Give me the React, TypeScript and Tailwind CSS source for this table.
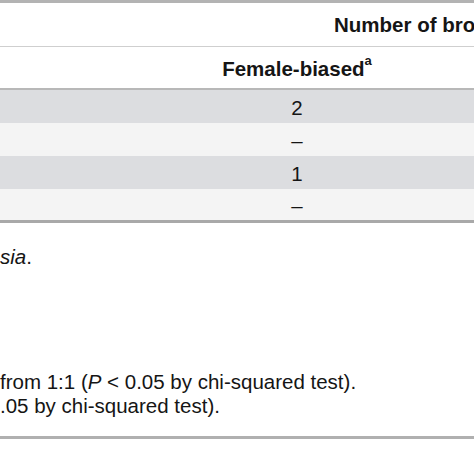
export default function App() {
  const rows = [
    { v: "2", bg: "bg-[#dcdde0]", h: "h-[33px]", lead: "leading-[30px]" },
    { v: "–", bg: "bg-[#f4f4f4]", h: "h-[33px]", lead: "leading-[30px]" },
    { v: "1", bg: "bg-[#dcdde0]", h: "h-[33px]", lead: "leading-[30px]" },
    { v: "–", bg: "bg-[#f4f4f4]", h: "h-[31px]", lead: "leading-[28px]" },
  ];
  return (
    <div
      className="w-[474px] h-[474px] overflow-hidden bg-white text-[#151515] text-[20.5px]"
      style={{ fontFamily: '"Liberation Sans", Arial, sans-serif' }}
    >
      <div className="h-[3px] bg-[#b3b3b3]" />
      <div className="h-[43px] flex items-center pl-[334px] whitespace-nowrap overflow-hidden">
        <span className="font-bold leading-[23px]">Number of broods</span>
      </div>
      <div className="h-px bg-[#cfcfcf]" />
      <div className="h-[41px] grid grid-cols-[197px_200px_1fr] items-center pt-[2px]">
        <div />
        <div className="text-center font-bold leading-[23px] whitespace-nowrap">
          Female-biased
          <span className="text-[13px] align-top relative top-[-3px] leading-none">a</span>
        </div>
        <div />
      </div>
      <div className="h-[2px] bg-[#b8b8b8]" />
      {rows.map((r, i) => (
        <div key={i} className={`${r.h} ${r.bg} grid grid-cols-[197px_200px_1fr] pt-[3px]`}>
          <div />
          <div className={`text-center ${r.lead}`}>{r.v}</div>
          <div />
        </div>
      ))}
      <div className="h-[3px] bg-[#a9a9a9]" />
      <div className="mt-[22px] leading-[24px] whitespace-nowrap">
        <i>sia</i>.
      </div>
      <div className="mt-[101px] leading-[24px] whitespace-nowrap">
        <div>
          from 1:1 (<i>P</i> &lt; 0.05 by chi-squared test).
        </div>
        <div>.05 by chi-squared test).</div>
      </div>
      <div className="mt-[18px] h-[3px] bg-[#b0b0b0]" />
    </div>
  );
}
